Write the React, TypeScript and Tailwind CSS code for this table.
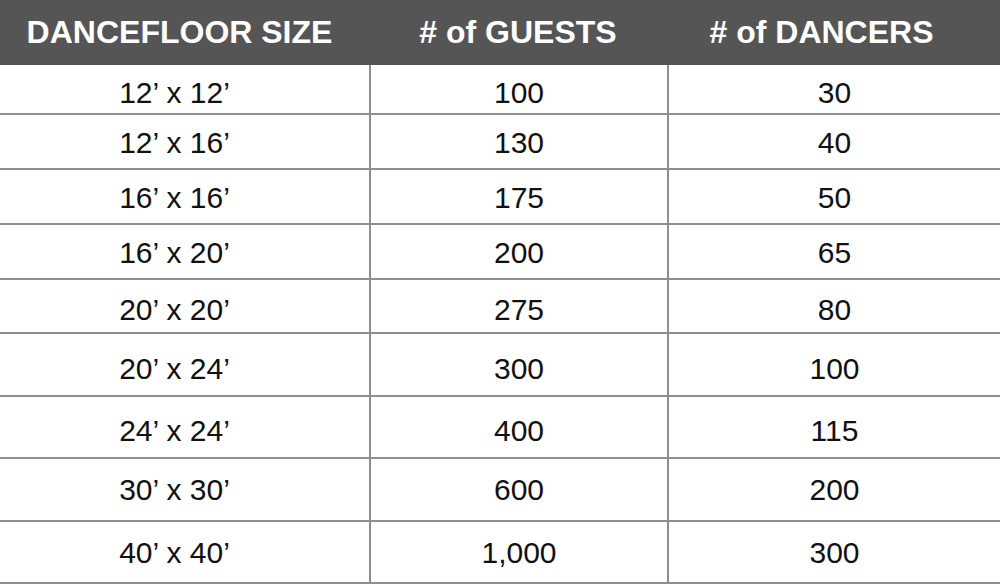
const rows = [
  { size: '12’ x 12’', guests: '100', dancers: '30', h: 'h-[50px]', pad: 'pt-[5px]' },
  { size: '12’ x 16’', guests: '130', dancers: '40', h: 'h-[55px]', pad: 'pt-[1px]' },
  { size: '16’ x 16’', guests: '175', dancers: '50', h: 'h-[55px]', pad: 'pt-[1px]' },
  { size: '16’ x 20’', guests: '200', dancers: '65', h: 'h-[55px]', pad: 'pt-[1px]' },
  { size: '20’ x 20’', guests: '275', dancers: '80', h: 'h-[54px]', pad: 'pt-[7px]' },
  { size: '20’ x 24’', guests: '300', dancers: '100', h: 'h-[63px]', pad: 'pt-[8px]' },
  { size: '24’ x 24’', guests: '400', dancers: '115', h: 'h-[62px]', pad: 'pt-[6px]' },
  { size: '30’ x 30’', guests: '600', dancers: '200', h: 'h-[63px]', pad: '' },
  { size: '40’ x 40’', guests: '1,000', dancers: '300', h: 'h-[62px]', pad: '' },
];

export default function App() {
  return (
    <div className="w-[1000px] h-[584px] bg-white overflow-hidden font-['Liberation_Sans',Arial,sans-serif]">
      <div className="grid grid-cols-[369px_298px_1fr] h-[65px] bg-[#555555] text-white font-bold text-[32px] items-center pb-[1px]">
        <div className="text-center pr-[10px]">DANCEFLOOR SIZE</div>
        <div className="text-center">
          # of GUESTS
        </div>
        <div className="text-center pr-[24px]">
          # of DANCERS
        </div>
      </div>
      {rows.map((r) => (
        <div
          key={r.size}
          className={`grid grid-cols-[369px_298px_1fr] ${r.h} border-b-2 border-[#8f8f8f] text-[30px] text-[#111111]`}
        >
          <div className={`flex items-center justify-center pr-[20px] ${r.pad}`}>{r.size}</div>
          <div className={`flex items-center justify-center border-l-2 border-[#8f8f8f] ${r.pad}`}>{r.guests}</div>
          <div className={`flex items-center justify-center border-l-2 border-[#8f8f8f] ${r.pad}`}>{r.dancers}</div>
        </div>
      ))}
    </div>
  );
}
